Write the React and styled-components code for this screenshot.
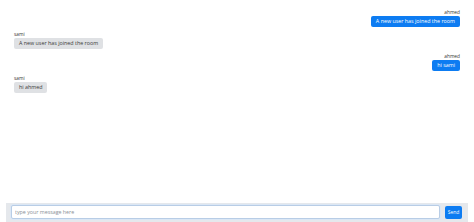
import styled, { createGlobalStyle } from 'styled-components'

const Global = createGlobalStyle`
html, body {
  margin: 0;
  padding: 0;
  background: #fff;
}
body {
  font-family: "Open Sans", "Liberation Sans", sans-serif;
}
* { box-sizing: border-box; }
`

const Page = styled.div`
height: 100vh;
display: flex;
flex-direction: column;
`

const MessageList = styled.div`
flex: 1;
display: flex;
flex-direction: column;
padding: 9px 14px 0 14px;
gap: 4.5px;
`

const Message = styled.div`
display: flex;
flex-direction: column;
align-items: ${p => (p.$mine ? 'flex-end' : 'flex-start')};
`

const Author = styled.span`
font-size: 4.8px;
line-height: 6px;
color: #333;
margin-bottom: 1px;
`

const Bubble = styled.div`
font-size: 5.35px;
line-height: 10.5px;
height: 10.5px;
padding: 0 5px;
border-radius: 2px;
background: ${p => (p.$mine ? '#0d7cf2' : '#dfe1e4')};
color: ${p => (p.$mine ? '#fff' : '#3a3a3a')};
`

const Footer = styled.form`
margin: 0 6px;
padding: 2px 5px 3px 5px;
background: #e5e8ec;
display: flex;
align-items: center;
gap: 5px;
`

const Input = styled.input`
flex: 1;
height: 14px;
border: 1px solid #b8cde6;
border-radius: 2px;
box-shadow: 0 0 0 1px #dbe7f5;
padding: 0 3px;
font-family: inherit;
font-size: 5.3px;
outline: none;
&::placeholder { color: #8a8f96; }
`

const SendButton = styled.button`
height: 13px;
width: 17px;
padding: 0;
border: none;
border-radius: 2px;
background: #0d7cf2;
color: #fff;
font-family: inherit;
font-size: 5px;
margin-right: 1px;
`

const messages = [
  { author: 'ahmed', text: 'A new user has joined the room', mine: true },
  { author: 'sami', text: 'A new user has joined the room', mine: false },
  { author: 'ahmed', text: 'hi sami', mine: true },
  { author: 'sami', text: 'hi ahmed', mine: false },
]

export default function App() {
  return (
    <Page>
      <Global />
      <MessageList>
        {messages.map((m, i) => (
          <Message key={i} $mine={m.mine}>
            <Author>{m.author}</Author>
            <Bubble $mine={m.mine}>{m.text}</Bubble>
          </Message>
        ))}
      </MessageList>
      <Footer onSubmit={e => e.preventDefault()}>
        <Input placeholder="type your message here" />
        <SendButton type="submit">Send</SendButton>
      </Footer>
    </Page>
  )
}
